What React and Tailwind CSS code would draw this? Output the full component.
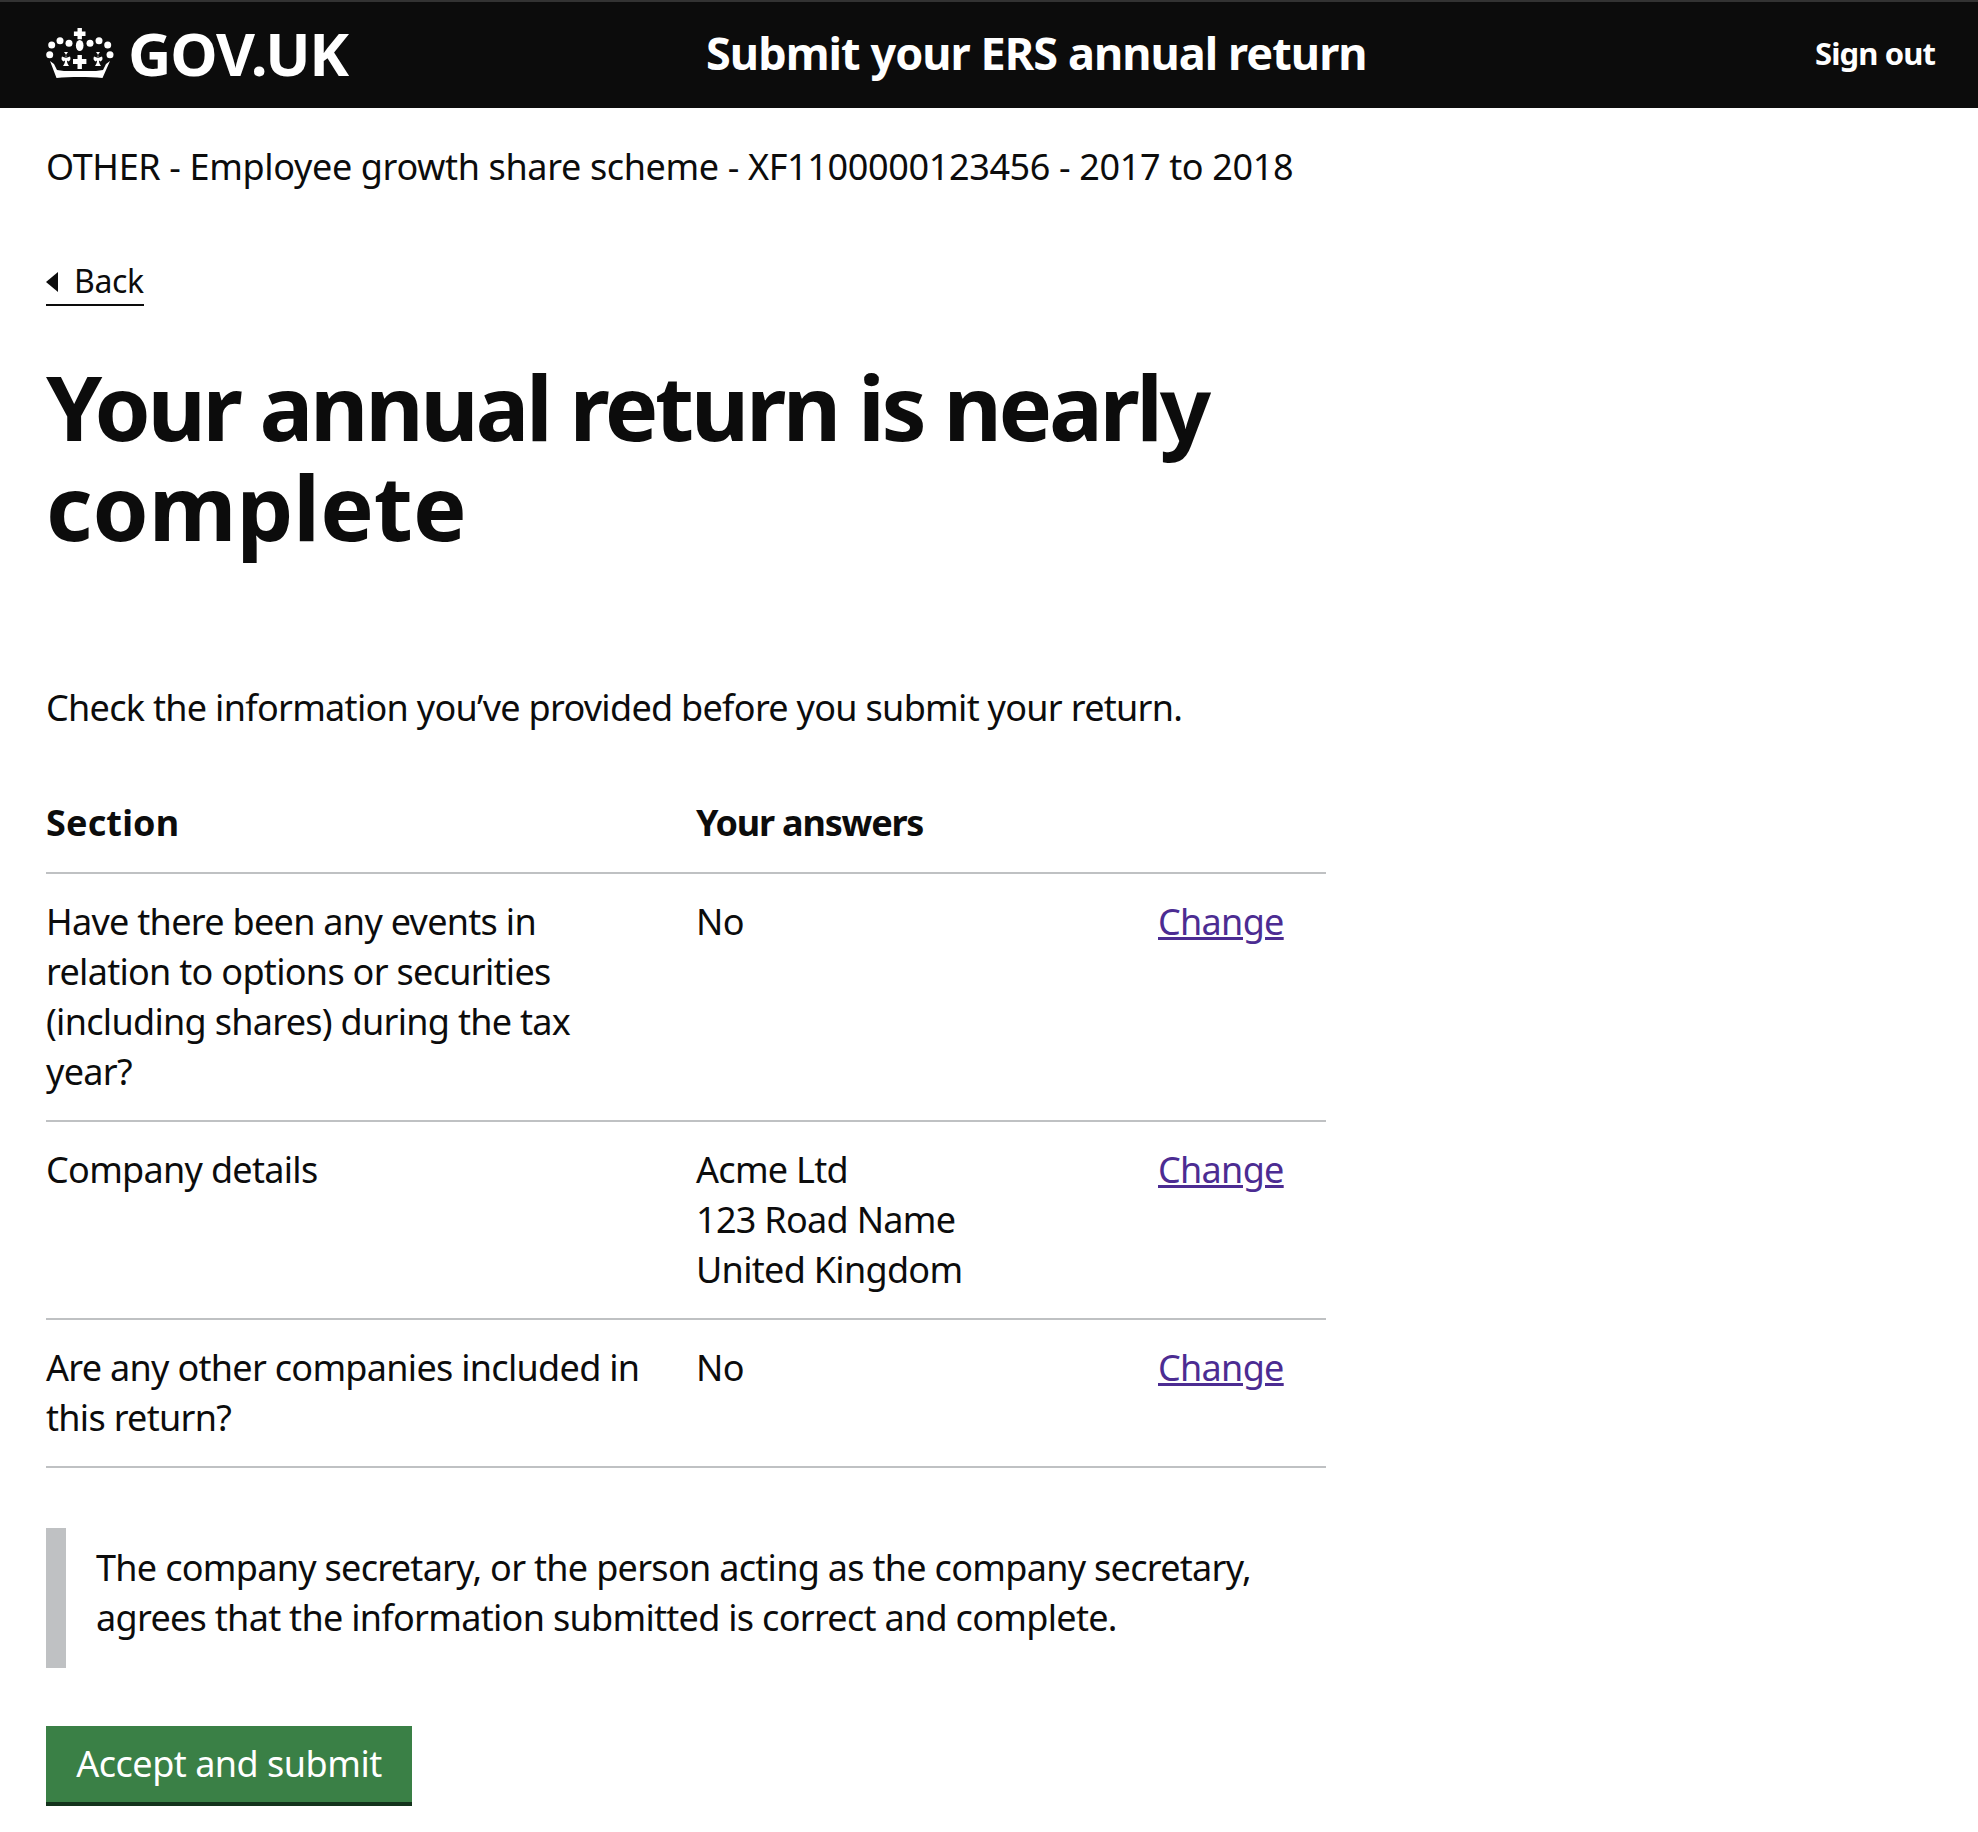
const rows = [
  {
    section:
      "Have there been any events in relation to options or securities (including shares) during the tax year?",
    answer: ["No"],
  },
  { section: "Company details", answer: ["Acme Ltd", "123 Road Name", "United Kingdom"] },
  { section: "Are any other companies included in this return?", answer: ["No"] },
];

function Crown() {
  return (
    <svg viewBox="0 0 68 50" className="h-[50px] w-[68px] shrink-0" fill="#fff" aria-hidden="true">
      <circle cx="5.7" cy="17" r="3.5" />
      <circle cx="14" cy="12.7" r="3.5" />
      <circle cx="23" cy="15.3" r="3.5" />
      <circle cx="44" cy="15.3" r="3.5" />
      <circle cx="53" cy="12.7" r="3.5" />
      <circle cx="61.7" cy="17" r="3.5" />
      <circle cx="3.7" cy="26.7" r="3.5" />
      <circle cx="64" cy="26.7" r="3.5" />
      <path d="M31.500 0h4.400v3.400h3.600v4.600h-3.600v3.200h-4.400V8h-3.600V3.400h3.600z" />
      <ellipse cx="33.700" cy="17.500" rx="3.800" ry="5.500" />
      <path d="M31.500 27h4.400v4h4.500v5h-4.500v5h-4.400v-5H27v-5h4.500z" />
      <path d="M18 24c2 2.500 3 4 2 6l4-1.500c1 2 .5 4-1.500 5l-1.500-1c0 2 .5 3.500 2 5.500h-6c1.500-2 2-3.500 2-5.500l-1.500 1c-2-1-2.500-3-1.500-5l4 1.500c-1-2 0-3.500 2-6z" />
      <path d="M50 24c2 2.500 3 4 2 6l4-1.500c1 2 .5 4-1.500 5l-1.500-1c0 2 .5 3.500 2 5.500h-6c1.500-2 2-3.500 2-5.500l-1.500 1c-2-1-2.500-3-1.500-5l4 1.500c-1-2 0-3.500 2-6z" />
      <path d="M4 33l4 3 3 6 7 1h32l7-1 3-6 4-3-7.500 17c-14-1.200-32-1.200-46 0z" />
    </svg>
  );
}

export default function App() {
  return (
    <div className="min-h-[1832px] bg-white font-['Noto_Sans',sans-serif] text-[36px] leading-[50px] tracking-[-0.7px] text-[#0c0c0c]">
      <header className="flex h-[108px] items-center border-t-2 border-[#333] bg-[#0c0c0c] pb-[4px] pl-[46px] pr-[43px] text-white">
        <div className="flex w-[660px] items-center gap-[14px]">
          <Crown />
          <span className="text-[60px] font-bold tracking-[-1.2px]">GOV.UK</span>
        </div>
        <div className="text-[45px] font-bold tracking-[-0.95px]">Submit your ERS annual return</div>
        <a className="ml-auto text-[31px] font-bold tracking-[-0.9px]">Sign out</a>
      </header>

      <main className="px-[46px]">
        <p className="pt-[34px] tracking-[-0.36px]">OTHER - Employee growth share scheme - XF1100000123456 - 2017 to 2018</p>

        <a className="mt-[64px] flex h-[50px] w-fit items-center gap-[16px] border-b-2 border-[#0c0c0c] pt-[2px] text-[32px] tracking-[-0.4px]">
          <span className="mt-[1px] h-0 w-0 border-y-[10px] border-r-[12px] border-y-transparent border-r-[#0c0c0c]" />
          Back
        </a>

        <h1 className="mt-[50px] w-[1280px] text-[90px] font-bold leading-[100px] tracking-[-3.35px]">
          Your annual return is nearly <span className="tracking-normal">complete</span>
        </h1>

        <p className="mt-[127px]">Check the information you’ve provided before you submit your return.</p>

        <table className="mt-[65px] w-[1280px] table-fixed border-collapse">
          <thead>
            <tr className="border-b-2 border-[#bfc1c3] text-left">
              <th className="w-[650px] pb-[24px] font-bold tracking-[0.15px]">Section</th>
              <th className="pb-[24px] font-bold tracking-[-1.2px]">Your answers</th>
              <th className="w-[210px] pb-[24px]" />
            </tr>
          </thead>
          <tbody>
            {rows.map((row) => (
              <tr key={row.section} className="border-b-2 border-[#bfc1c3] align-top">
                <td className="py-[23px] pr-[50px]">{row.section}</td>
                <td className="py-[23px]">
                  {row.answer.map((line) => (
                    <div key={line}>{line}</div>
                  ))}
                </td>
                <td className="py-[23px] pl-[42px]">
                  <a className="text-[#4c2c92] underline">Change</a>
                </td>
              </tr>
            ))}
          </tbody>
        </table>

        <div className="mt-[60px] w-[1280px] border-l-[20px] border-[#bfc1c3] pb-[25px] pl-[30px] pt-[15px]">
          The company secretary, or the person acting as the company secretary, agrees that the information submitted is correct and complete.
        </div>

        <button className="mt-[58px] block h-[80px] w-[366px] border-b-4 border-[#14331c] bg-[#3a8046] text-center tracking-[-0.5px] text-white">
          Accept and submit
        </button>
      </main>
    </div>
  );
}
